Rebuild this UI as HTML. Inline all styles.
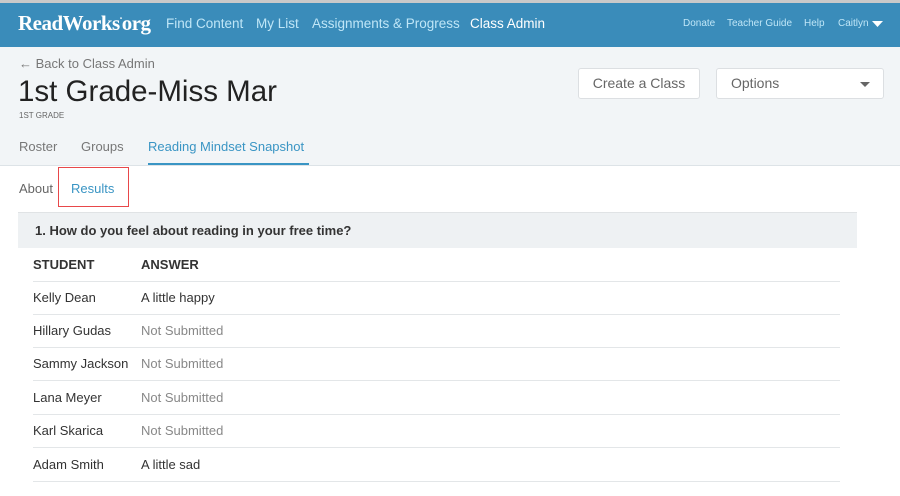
<!DOCTYPE html>
<html><head><style>
body{margin:0;width:900px;height:496px;overflow:hidden;font-family:"Liberation Sans",sans-serif;background:#fff;position:relative}
.a{position:absolute;white-space:nowrap}
#top{position:absolute;left:0;top:0;width:900px;height:3px;background:#c9c9c9}
#nav{position:absolute;left:0;top:3px;width:900px;height:44px;background:#3a8cba}
#gray{position:absolute;left:0;top:47px;width:900px;height:118px;background:#f2f5f7;border-bottom:1px solid #dde3e7}
.btn{position:absolute;background:#fff;border:1px solid #dcdfe2;border-radius:3px;height:29px;top:68px;font-size:14px;color:#666;line-height:29px}
.row{position:absolute;left:33px;width:807px;height:33px;border-bottom:1px solid #e3e6e8;font-size:13px;color:#333;line-height:33px}
.row span{position:absolute;left:108px}
.ns{color:#888}
</style></head><body>
<div id="top"></div>
<div id="nav"></div>
<div class="a" style="left:18px;top:11px;font-family:'Liberation Serif',serif;font-weight:bold;font-size:21px;color:#fff;letter-spacing:-0.5px">ReadWorks<span style="font-size:10px;vertical-align:top">.</span>org</div>
<div class="a" style="left:166px;top:16px;font-size:13.5px;color:#bfe6f7">Find Content</div>
<div class="a" style="left:256px;top:16px;font-size:13.5px;color:#bfe6f7">My List</div>
<div class="a" style="left:312px;top:16px;font-size:13.5px;color:#bfe6f7">Assignments &amp; Progress</div>
<div class="a" style="left:470px;top:16px;font-size:13.5px;color:#fff">Class Admin</div>
<div class="a" style="left:683px;top:18px;font-size:10px;color:#bfe6f7">Donate</div>
<div class="a" style="left:727px;top:18px;font-size:10px;color:#bfe6f7">Teacher Guide</div>
<div class="a" style="left:804px;top:18px;font-size:10px;color:#bfe6f7">Help</div>
<div class="a" style="left:838px;top:18px;font-size:10px;color:#bfe6f7">Caitlyn</div>
<svg class="a" style="left:872px;top:21px" width="11" height="7"><path d="M0 0H11L5.5 6Z" fill="#fff"/></svg>
<div id="gray"></div>
<div class="a" style="left:19px;top:56px;font-size:13px;color:#777">← Back to Class Admin</div>
<div class="a" style="left:18px;top:75px;font-size:29.5px;color:#222">1st Grade-Miss Mar</div>
<div class="a" style="left:19px;top:111px;font-size:8px;color:#666">1ST GRADE</div>
<div class="btn" style="left:578px;width:120px;text-align:center">Create a Class</div>
<div class="btn" style="left:716px;width:166px;padding-left:0"><span style="margin-left:14px">Options</span><svg style="position:absolute;right:13px;top:13px" width="10" height="5"><path d="M0 0H10L5 5Z" fill="#666"/></svg></div>
<div class="a" style="left:19px;top:139px;font-size:13px;color:#777">Roster</div>
<div class="a" style="left:81px;top:139px;font-size:13px;color:#777">Groups</div>
<div class="a" style="left:148px;top:139px;font-size:13px;color:#3a95c4">Reading Mindset Snapshot</div>
<div class="a" style="left:148px;top:163px;width:161px;height:2px;background:#3a95c4"></div>
<div class="a" style="left:19px;top:181px;font-size:13px;color:#666">About</div>
<div class="a" style="left:58px;top:167px;width:69px;height:38px;border:1px solid #e8484a"></div>
<div class="a" style="left:71px;top:181px;font-size:13px;color:#3a95c4">Results</div>
<div class="a" style="left:18px;top:212px;width:839px;height:35px;background:#eef1f3;border-top:1px solid #e0e3e5"></div>
<div class="a" style="left:35px;top:223px;font-size:13px;font-weight:bold;color:#333">1. How do you feel about reading in your free time?</div>
<div class="row" style="top:248px;font-weight:bold;font-size:13px">STUDENT<span>ANSWER</span></div>
<div class="row" style="top:281px">Kelly Dean<span>A little happy</span></div>
<div class="row" style="top:314px">Hillary Gudas<span class="ns">Not Submitted</span></div>
<div class="row" style="top:347px">Sammy Jackson<span class="ns">Not Submitted</span></div>
<div class="row" style="top:381px">Lana Meyer<span class="ns">Not Submitted</span></div>
<div class="row" style="top:414px">Karl Skarica<span class="ns">Not Submitted</span></div>
<div class="row" style="top:448px">Adam Smith<span>A little sad</span></div>
</body></html>
